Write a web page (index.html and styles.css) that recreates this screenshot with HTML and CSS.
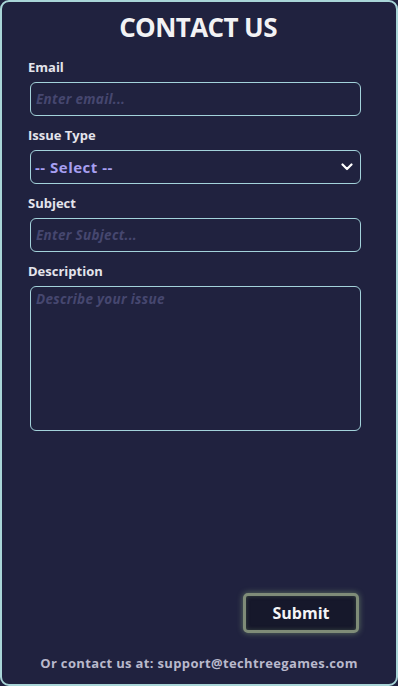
FILE: index.html
```html
<!DOCTYPE html>
<html>
<head>
<meta charset="utf-8">
<link rel="stylesheet" href="styles.css">
</head>
<body>
<div class="panel">
  <h1 class="title">CONTACT US</h1>
  <form class="form">
    <label class="label">Email</label>
    <input class="field" type="text" placeholder="Enter email...">
    <label class="label">Issue Type</label>
    <div class="select">
      <span class="select-text">-- Select --</span>
      <svg class="chev" width="12" height="8" viewBox="0 0 12 8"><path d="M1.5 1.5 L6 6 L10.5 1.5" fill="none" stroke="#ffffff" stroke-width="2.2" stroke-linecap="round" stroke-linejoin="round"/></svg>
    </div>
    <label class="label">Subject</label>
    <input class="field" type="text" placeholder="Enter Subject...">
    <label class="label">Description</label>
    <textarea class="field area" placeholder="Describe your issue"></textarea>
  </form>
  <div class="spacer"></div>
  <div class="actions">
    <button class="submit" type="button">Submit</button>
  </div>
  <p class="footer">Or contact us at: support@techtreegames.com</p>
</div>
</body>
</html>
```

FILE: styles.css
```css
html, body {
  margin: 0;
  padding: 0;
  background: #20223f;
}
body {
  font-family: "Open Sans", "DejaVu Sans", sans-serif;
}
.panel {
  box-sizing: border-box;
  width: 398px;
  height: 686px;
  border: 2px solid #a9d6d8;
  border-radius: 9px;
  background: #20223f;
  display: flex;
  flex-direction: column;
  padding: 0 36px 0 26px;
}
.title {
  margin: 7px 0 0 0;
  text-align: center;
  font-size: 26px;
  line-height: 36px;
  font-weight: 700;
  color: #f2f2f4;
  letter-spacing: -0.6px;
  padding-left: 8px;
}
.form {
  display: flex;
  flex-direction: column;
  margin-top: 13px;
}
.label {
  font-size: 13px;
  font-weight: 700;
  color: #e4e4ec;
  line-height: 18px;
  margin-bottom: 6px;
}
.field {
  box-sizing: border-box;
  margin: 0 0 10px 2px;
  height: 34px;
  width: 331px;
  background: #20223f;
  border: 1.5px solid #a3d2da;
  border-radius: 6px;
  padding: 0 5px;
  font-family: inherit;
  font-size: 13.5px;
  font-weight: 700;
  font-style: italic;
  letter-spacing: 0.3px;
  color: #e4e4ec;
  outline: none;
}
.field::placeholder {
  color: #46476f;
  font-style: italic;
  font-weight: 700;
}
.select {
  box-sizing: border-box;
  margin: 0 0 10px 2px;
  height: 34px;
  width: 331px;
  border: 1.5px solid #a3d2da;
  border-radius: 6px;
  display: flex;
  align-items: center;
  justify-content: space-between;
  padding: 0 6px 0 4px;
}
.select-text {
  font-size: 15px;
  font-weight: 700;
  letter-spacing: 0.5px;
  color: #a79ff0;
}
.chev {
  display: block;
  margin-right: 1px;
}
.area {
  height: 145px;
  resize: none;
  padding: 3px 5px;
}
.spacer {
  flex: 1;
}
.actions {
  display: flex;
  justify-content: flex-end;
}
.submit {
  box-sizing: border-box;
  width: 116px;
  height: 40px;
  margin-right: 1px;
  background: #16182b;
  border: 3px solid #7f8c78;
  border-radius: 5px;
  box-shadow: 0 0 6px rgba(170, 210, 140, 0.45), inset 0 0 4px rgba(170, 210, 140, 0.25);
  color: #f4f4f6;
  font-family: inherit;
  font-size: 16px;
  font-weight: 700;
}
.footer {
  margin: 21px 0 12px 0;
  padding-left: 10px;
  text-align: center;
  font-size: 13px;
  font-weight: 700;
  letter-spacing: 0.35px;
  color: #b9b9cc;
  line-height: 18px;
}
```
